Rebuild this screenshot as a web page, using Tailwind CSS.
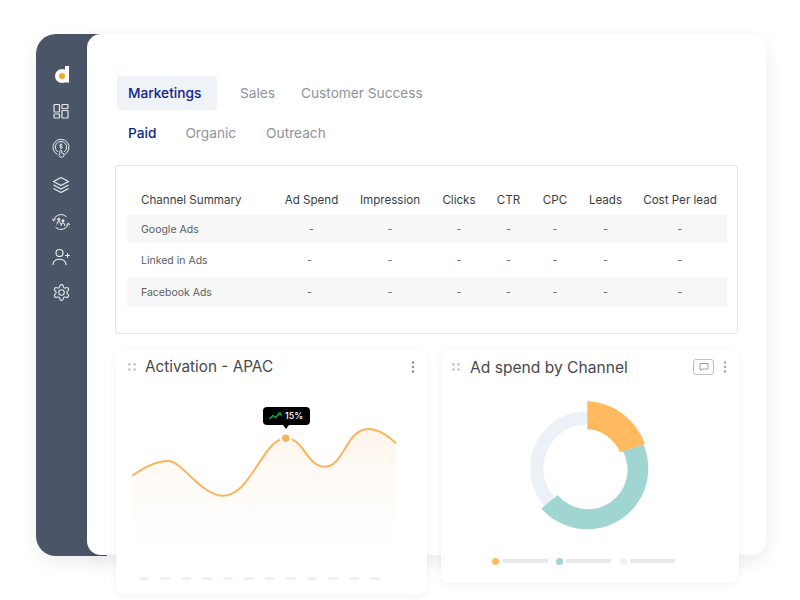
<!doctype html>
<html>
<head>
<meta charset="utf-8">
<script src="https://cdn.jsdelivr.net/npm/@tailwindcss/browser@4"></script>
</head>
<body class="bg-white overflow-hidden h-[600px] w-[800px] font-['Inter',sans-serif]">
<div class="pl-[36px] pt-[34px]">
  <div class="flex w-[730px] h-[522px]">
    <aside class="w-[71px] h-[522px] shrink-0 flex flex-col items-center pt-[21px] pr-[21px] rounded-l-[20px] bg-[#4a5568] shadow-[0_6px_20px_rgba(30,40,60,0.08)] text-[#e8ecf1]">
      <div class="h-[37px] flex items-center justify-center">
        <svg width="18" height="20" viewBox="0 0 18 20"><circle cx="10" cy="12" r="5" fill="#f6a623" stroke="#fff" stroke-width="4"/><rect x="13" y="2" width="4" height="16.500" fill="#fff"/></svg>
      </div>
      <div class="h-[37px] flex items-center justify-center">
        <svg width="16" height="16" viewBox="0 0 16 16" fill="none" stroke="currentColor" stroke-width="1.200"><rect x="1" y="1.500" width="5.500" height="7.500" rx="0.700"/><rect x="9" y="1.500" width="6" height="4" rx="0.700"/><rect x="9" y="7.500" width="6" height="7.500" rx="0.700"/><rect x="1" y="11" width="5.500" height="4" rx="0.700"/></svg>
      </div>
      <div class="h-[37px] flex items-center justify-center">
        <svg width="18" height="20" viewBox="0 0 18 20" fill="none" stroke="currentColor" stroke-width="1"><path d="M5.500 16.500A8 8 0 1 1 12.500 16.500"/><path d="M6 14A5.700 5.700 0 1 1 12 14"/><path d="M10.300 7C10 6.200 7.700 6.200 7.700 7.400C7.700 8.700 10.400 7.900 10.400 9.200C10.400 10.400 8 10.300 7.600 9.400M9 5.500V10.800" stroke-width="0.900"/><path d="M7.800 13V16.500C6.500 16.500 6.300 18.800 8.500 19H10.500C12 19 12.300 17.500 11.800 15.800L9.800 15V13C9.800 12 7.800 12 7.800 13Z" stroke-width="1"/></svg>
      </div>
      <div class="h-[37px] flex items-center justify-center">
        <svg width="18" height="18" viewBox="0 0 18 18" fill="none" stroke="currentColor" stroke-width="1.200" stroke-linejoin="round"><path d="M9 1.500L16.500 5.500L9 9.500L1.500 5.500Z"/><path d="M1.500 9L9 13L16.500 9"/><path d="M1.500 12.500L9 16.500L16.500 12.500"/></svg>
      </div>
      <div class="h-[37px] flex items-center justify-center">
        <svg width="18" height="18" viewBox="0 0 18 18" fill="none" stroke="currentColor" stroke-width="1"><path d="M1.600 7.500A7.600 7.600 0 0 1 14.500 3.800"/><path d="M16.400 10.500A7.600 7.600 0 0 1 3.500 14.200"/><path d="M0.200 5.600L1.600 8L3.600 6.100M17.800 12.400L16.400 10L14.400 11.900"/><circle cx="6.800" cy="6.300" r="1.100" fill="currentColor"/><path d="M4.800 11.500L5.800 8.600H7.800L8.800 11.500"/><circle cx="11" cy="7.800" r="1.100" fill="currentColor"/><path d="M9 13L10 10.100H12L13 13"/></svg>
      </div>
      <div class="h-[33px] flex items-center justify-center">
        <svg width="18" height="18" viewBox="0 0 18 18" fill="none" stroke="currentColor" stroke-width="1.200" stroke-linecap="round"><circle cx="7.500" cy="5" r="3.500"/><path d="M1 16.500C1.500 9.500 13.500 9.500 14 16.500"/><path d="M13.500 7.500H17.500M15.500 5.500V9.500" stroke-width="1"/></svg>
      </div>
      <div class="h-[39px] flex items-center justify-center">
        <svg width="19" height="19" viewBox="0 0 24 24" fill="none" stroke="currentColor" stroke-width="1.400" stroke-linejoin="round"><path d="M12.220 2h-.44a2 2 0 0 0-2 2v.18a2 2 0 0 1-1 1.730l-.43.25a2 2 0 0 1-2 0l-.15-.08a2 2 0 0 0-2.730.73l-.22.38a2 2 0 0 0 .73 2.730l.15.1a2 2 0 0 1 1 1.720v.51a2 2 0 0 1-1 1.740l-.15.09a2 2 0 0 0-.73 2.730l.22.38a2 2 0 0 0 2.730.73l.15-.08a2 2 0 0 1 2 0l.43.25a2 2 0 0 1 1 1.730V20a2 2 0 0 0 2 2h.44a2 2 0 0 0 2-2v-.18a2 2 0 0 1 1-1.730l.43-.25a2 2 0 0 1 2 0l.15.08a2 2 0 0 0 2.730-.73l.22-.39a2 2 0 0 0-.73-2.730l-.15-.08a2 2 0 0 1-1-1.740v-.5a2 2 0 0 1 1-1.740l.15-.09a2 2 0 0 0 .73-2.730l-.22-.38a2 2 0 0 0-2.730-.73l-.15.08a2 2 0 0 1-2 0l-.43-.25a2 2 0 0 1-1-1.730V4a2 2 0 0 0-2-2z"/><circle cx="12" cy="12" r="3.500"/></svg>
      </div>
    </aside>

    <main class="relative -ml-[20px] w-[679px] h-[521px] bg-white rounded-[14px] pt-[42px] pl-[30px] shadow-[0_6px_18px_rgba(30,40,60,0.09)]">
      <div class="flex items-center h-[34px] text-[13.700px] text-[#8f939c]">
        <div class="w-[100px] h-[34px] flex items-center pl-[11px] rounded-[3px] bg-[#eff2f7] text-[#101f8c] font-medium">Marketings</div>
        <div class="ml-[23px]">Sales</div>
        <div class="ml-[26px]">Customer Success</div>
      </div>
      <div class="flex items-center h-[34px] mt-[6px] pl-[11px] text-[13.700px] text-[#8f939c]">
        <div class="text-[#101f8c] font-medium">Paid</div>
        <div class="ml-[29px]">Organic</div>
        <div class="ml-[30px]">Outreach</div>
      </div>

      <section class="-ml-[2px] mt-[15px] w-[623px] h-[169px] border border-[#e2e4e7] rounded-[3px] px-[11px] pt-[24px]">
        <div class="grid grid-cols-[151px_67px_90px_48px_51px_42px_59px_90px] items-center justify-items-center h-[20px] pt-[1px] mb-[5px] text-[11.600px] text-[#3a3d42]">
          <div class="justify-self-start pl-[14px]">Channel Summary</div>
          <div>Ad Spend</div><div>Impression</div><div>Clicks</div><div>CTR</div><div>CPC</div><div>Leads</div><div>Cost Per lead</div>
        </div>
        <div class="grid grid-cols-[151px_67px_90px_48px_51px_42px_59px_90px] items-center justify-items-center w-[600px] h-[28px] pt-[2px] bg-[#f7f7f7] text-[10.500px] text-[#5b5d62]">
          <div class="justify-self-start pl-[14px]">Google Ads</div>
          <div>-</div><div>-</div><div>-</div><div>-</div><div>-</div><div>-</div><div>-</div>
        </div>
        <div class="grid grid-cols-[151px_67px_90px_48px_51px_42px_59px_90px] items-center justify-items-center w-[600px] h-[34px] pt-[2px] text-[10.500px] text-[#5b5d62]">
          <div class="justify-self-start pl-[14px]">Linked in Ads</div>
          <div class="pr-[4px]">-</div><div>-</div><div>-</div><div>-</div><div>-</div><div>-</div><div>-</div>
        </div>
        <div class="grid grid-cols-[151px_67px_90px_48px_51px_42px_59px_90px] items-center justify-items-center w-[600px] h-[29px] pt-[2px] bg-[#f7f7f7] text-[10.500px] text-[#5b5d62]">
          <div class="justify-self-start pl-[14px]">Facebook Ads</div>
          <div class="pr-[4px]">-</div><div>-</div><div>-</div><div>-</div><div>-</div><div>-</div><div>-</div>
        </div>
      </section>

      <div class="flex items-start gap-[14px] -ml-[1px] mt-[15px]">
        <section class="relative shrink-0 w-[311px] h-[245px] bg-white rounded-[10px] shadow-[0_2px_10px_rgba(30,40,60,0.06)]">
          <header class="h-[36px] flex items-center pl-[12px] pr-[12px]">
            <svg width="8" height="8" viewBox="0 0 8 8" fill="#c4c6ca"><circle cx="1.400" cy="1.400" r="1.400"/><circle cx="6.600" cy="1.400" r="1.400"/><circle cx="1.400" cy="6.600" r="1.400"/><circle cx="6.600" cy="6.600" r="1.400"/></svg>
            <h2 class="ml-[9px] pt-[1px] text-[15.300px] text-[#48494d] font-normal">Activation - APAC</h2>
            <svg class="ml-auto" width="4" height="12" viewBox="0 0 4 12" fill="#8a8c91"><circle cx="2" cy="1.500" r="1.200"/><circle cx="2" cy="6" r="1.200"/><circle cx="2" cy="10.500" r="1.200"/></svg>
          </header>
          <svg class="block" width="311" height="180" viewBox="116 385 311 180" fill="none">
            <defs><linearGradient id="area" x1="0" y1="0" x2="0" y2="1"><stop offset="0" stop-color="#fdf1e3" stop-opacity="0.700"/><stop offset="1" stop-color="#fff" stop-opacity="0.300"/></linearGradient></defs>
            <path d="M132.300 475.700C143 468 156 461 168.300 461C182 461 201 495.700 223.300 495.700C251 495.700 263 438.300 285.700 438.300C305 438.300 306 466.700 325 466.700C344 466.700 346 429 368.300 429C379 429 390 437 396 443.300V555H132.300Z" fill="url(#area)"/>
            <path d="M132.300 475.700C143 468 156 461 168.300 461C182 461 201 495.700 223.300 495.700C251 495.700 263 438.300 285.700 438.300C305 438.300 306 466.700 325 466.700C344 466.700 346 429 368.300 429C379 429 390 437 396 443.300" stroke="#fbb45c" stroke-width="2"/>
            <circle cx="285.700" cy="438.300" r="6" fill="#fff"/>
            <circle cx="285.700" cy="438.300" r="3.800" fill="#fbb45c"/>
          </svg>
          <div class="flex gap-[11px] pl-[23px] mt-[12px]">
            <i class="w-[10px] h-[3px] rounded-full bg-[#eef2f7]"></i><i class="w-[10px] h-[3px] rounded-full bg-[#eef2f7]"></i><i class="w-[10px] h-[3px] rounded-full bg-[#eef2f7]"></i><i class="w-[10px] h-[3px] rounded-full bg-[#eef2f7]"></i><i class="w-[10px] h-[3px] rounded-full bg-[#eef2f7]"></i><i class="w-[10px] h-[3px] rounded-full bg-[#eef2f7]"></i><i class="w-[10px] h-[3px] rounded-full bg-[#eef2f7]"></i><i class="w-[10px] h-[3px] rounded-full bg-[#eef2f7]"></i><i class="w-[10px] h-[3px] rounded-full bg-[#eef2f7]"></i><i class="w-[10px] h-[3px] rounded-full bg-[#eef2f7]"></i><i class="w-[10px] h-[3px] rounded-full bg-[#eef2f7]"></i><i class="w-[10px] h-[3px] rounded-full bg-[#eef2f7]"></i>
          </div>
          <div class="absolute left-[147px] top-[58px] w-[47px] h-[18px] rounded-[4px] bg-black flex items-center pl-[6px] text-[9px] font-medium text-white">
            <svg width="13" height="8" viewBox="0 0 13 8" fill="none" stroke="#16a34a" stroke-width="1.500"><path d="M0.500 7L4 3.500L6.500 5.500L11 1"/><path d="M8.500 0.500H12.500V4.500Z" fill="#16a34a" stroke="none"/></svg>
            <span class="ml-[3px]">15%</span>
            <span class="absolute left-[20px] -bottom-[4px] w-0 h-0 border-x-[3.500px] border-x-transparent border-t-[4px] border-t-black"></span>
          </div>
        </section>

        <section class="shrink-0 w-[298px] h-[234px] bg-white rounded-[10px] shadow-[0_2px_10px_rgba(30,40,60,0.06)]">
          <header class="h-[36px] flex items-center pl-[11px] pr-[12px]">
            <svg width="8" height="8" viewBox="0 0 8 8" fill="#c4c6ca"><circle cx="1.400" cy="1.400" r="1.400"/><circle cx="6.600" cy="1.400" r="1.400"/><circle cx="1.400" cy="6.600" r="1.400"/><circle cx="6.600" cy="6.600" r="1.400"/></svg>
            <h2 class="ml-[10px] pt-[1px] text-[15.600px] text-[#48494d] font-normal">Ad spend by Channel</h2>
            <div class="ml-auto w-[21px] h-[16px] border border-[#bfc1c5] rounded-[3px] flex items-center justify-center">
              <svg width="10" height="10" viewBox="0 0 10 10" fill="none" stroke="#8a8c91" stroke-width="0.800"><path d="M1 1.500H9V7H3L1.500 8.500V7H1Z"/></svg>
            </div>
            <svg class="ml-[9px]" width="4" height="12" viewBox="0 0 4 12" fill="#a5a7ab"><circle cx="2" cy="1.500" r="1.200"/><circle cx="2" cy="6" r="1.200"/><circle cx="2" cy="10.500" r="1.200"/></svg>
          </header>
          <svg class="block" width="298" height="165" viewBox="441 385 298 165" fill="none">
            <circle cx="587.300" cy="468.300" r="50.500" stroke="#ebf1f6" stroke-width="13"/>
            <path d="M643.500 444.600A61 61 0 0 1 541.300 508.400L557.700 495A39.500 39.500 0 0 0 622.800 450.900Z" fill="#a1d5d1"/>
            <path d="M587.300 401A65 65 0 0 1 645 444L620 452.300A38 38 0 0 0 587.300 429Z" fill="#ffb95f"/>
          </svg>
          <div class="flex items-center h-[8px] mt-[7px] pl-[51px]">
            <i class="w-[7px] h-[7px] rounded-full bg-[#ffb95f]"></i><i class="ml-[3.500px] w-[45px] h-[4px] bg-[#e9e9e9]"></i>
            <i class="ml-[8px] w-[7px] h-[7px] rounded-full bg-[#a1d5d1]"></i><i class="ml-[3.500px] w-[45px] h-[4px] bg-[#e9e9e9]"></i>
            <i class="ml-[8.500px] w-[7px] h-[7px] rounded-full bg-[#ebf1f6]"></i><i class="ml-[3.500px] w-[45px] h-[4px] bg-[#e9e9e9]"></i>
          </div>
        </section>
      </div>
    </main>
  </div>
</div>
</body>
</html>
